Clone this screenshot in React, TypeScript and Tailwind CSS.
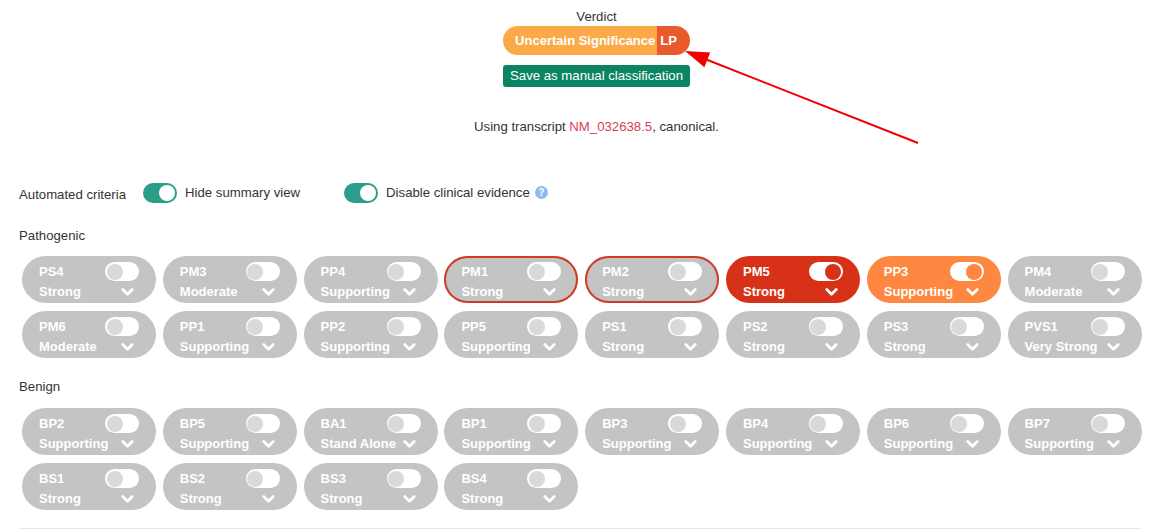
import React from "react";

type Variant = "grey" | "outlined" | "red" | "orange";

function Chevron() {
  return (
    <svg width="13" height="8" viewBox="0 0 13 8" className="block">
      <path d="M1.8 1.6 L6.5 6.2 L11.2 1.6" fill="none" stroke="white" strokeWidth="2.8" strokeLinecap="round" strokeLinejoin="round" />
    </svg>
  );
}

function ChipToggle({ on, color }: { on: boolean; color: string }) {
  return (
    <div className="relative w-[34px] h-[19px] rounded-full bg-white">
      {on ? (
        <div className={`absolute right-[1.5px] top-[1.5px] w-[16px] h-[16px] rounded-full ${color}`} />
      ) : (
        <div className="absolute left-[1.5px] top-[1.5px] w-[16px] h-[16px] rounded-full bg-[#d9d9d9]" />
      )}
    </div>
  );
}

function Chip({ code, strength, variant = "grey" }: { code: string; strength: string; variant?: Variant }) {
  const bg =
    variant === "red" ? "bg-[#d73217]" : variant === "orange" ? "bg-[#fe8742]" : "bg-[#c4c4c4]";
  const ring = variant === "outlined" ? "ring-2 ring-inset ring-[#d33b24]" : "";
  const knob = variant === "red" ? "bg-[#d73217]" : "bg-[#fe8742]";
  return (
    <div className={`w-[134px] h-[47px] rounded-full ${bg} ${ring} pl-[17px] pt-[6px] text-white font-bold text-[13px]`}>
      <div className="flex items-center h-[19px]">
        <span className="w-[66px] leading-[16px]">{code}</span>
        <ChipToggle on={variant === "red" || variant === "orange"} color={knob} />
      </div>
      <div className="flex items-center h-[16px] mt-[3px]">
        <span className="w-[82px] leading-[16px] whitespace-nowrap">{strength}</span>
        <Chevron />
      </div>
    </div>
  );
}

function TealToggle() {
  return (
    <div className="relative w-[34px] h-[20px] rounded-full bg-[#2b9d88] shrink-0">
      <div className="absolute right-[2px] top-[2px] w-[16px] h-[16px] rounded-full bg-white" />
    </div>
  );
}

const pathogenic: [string, string, Variant][] = [
  ["PS4", "Strong", "grey"],
  ["PM3", "Moderate", "grey"],
  ["PP4", "Supporting", "grey"],
  ["PM1", "Strong", "outlined"],
  ["PM2", "Strong", "outlined"],
  ["PM5", "Strong", "red"],
  ["PP3", "Supporting", "orange"],
  ["PM4", "Moderate", "grey"],
  ["PM6", "Moderate", "grey"],
  ["PP1", "Supporting", "grey"],
  ["PP2", "Supporting", "grey"],
  ["PP5", "Supporting", "grey"],
  ["PS1", "Strong", "grey"],
  ["PS2", "Strong", "grey"],
  ["PS3", "Strong", "grey"],
  ["PVS1", "Very Strong", "grey"],
];

const benign: [string, string, Variant][] = [
  ["BP2", "Supporting", "grey"],
  ["BP5", "Supporting", "grey"],
  ["BA1", "Stand Alone", "grey"],
  ["BP1", "Supporting", "grey"],
  ["BP3", "Supporting", "grey"],
  ["BP4", "Supporting", "grey"],
  ["BP6", "Supporting", "grey"],
  ["BP7", "Supporting", "grey"],
  ["BS1", "Strong", "grey"],
  ["BS2", "Strong", "grey"],
  ["BS3", "Strong", "grey"],
  ["BS4", "Strong", "grey"],
];

export default function App() {
  return (
    <div className="relative w-[1157px] h-[530px] overflow-hidden bg-white font-['Liberation_Sans',Arial,sans-serif] text-[13.2px] text-[#333]">
      <div className="flex flex-col items-center pl-[36px] pt-[9px]">
        <div className="leading-[16px]">Verdict</div>
        <div className="mt-[1px] flex h-[29px] rounded-full overflow-hidden font-bold text-[13px] text-white items-stretch">
          <span className="bg-[#fcaa48] pl-[12px] pr-[2px] flex items-center">Uncertain Significance</span>
          <span className="bg-[#ea5a2c] pl-[3px] pr-[13px] flex items-center">LP</span>
        </div>
        <button className="mt-[10px] h-[22px] px-[7px] rounded-[3px] bg-[#0b8561] text-white text-[13.2px] leading-[22px]">
          Save as manual classification
        </button>
        <div className="mt-[32px] leading-[16px]">
          Using transcript <span className="text-[#d64259]">NM_032638.5</span>, canonical.
        </div>
      </div>

      <div className="px-[19px]">
        <div className="mt-[48px] flex items-center h-[20px]">
          <span className="leading-[16px] mt-[3px]">Automated criteria</span>
          <div className="ml-[17px]"><TealToggle /></div>
          <span className="ml-[8px] leading-[16px] -mt-[1px]">Hide summary view</span>
          <div className="ml-[44px]"><TealToggle /></div>
          <span className="ml-[8px] leading-[16px] -mt-[1px]">Disable clinical evidence</span>
          <span className="ml-[5px] -mt-[2px] w-[13px] h-[13px] rounded-full bg-[#8bb9f2] text-white text-[10px] font-bold leading-[13px] text-center">?</span>
        </div>

        <div className="mt-[25px] leading-[16px]">Pathogenic</div>
        <div className="mt-[12px] pl-[3px] w-[1130px] flex flex-wrap gap-x-[6.8px] gap-y-[8px]">
          {pathogenic.map(([c, s, v]) => (
            <Chip key={c} code={c} strength={s} variant={v} />
          ))}
        </div>

        <div className="mt-[21px] leading-[16px]">Benign</div>
        <div className="mt-[13px] pl-[3px] w-[1130px] flex flex-wrap gap-x-[6.8px] gap-y-[8px]">
          {benign.map(([c, s, v]) => (
            <Chip key={c} code={c} strength={s} variant={v} />
          ))}
        </div>

        <div className="mt-[18px] w-[1122px] border-t border-[#e6e6e6]" />
      </div>

      <svg className="absolute left-0 top-0 pointer-events-none" width="1157" height="530">
        <line x1="918" y1="143" x2="705" y2="59" stroke="#f20000" strokeWidth="2" />
        <polygon points="685,51 704.4,67.2 710.2,52.4" fill="#f20000" />
      </svg>
    </div>
  );
}
